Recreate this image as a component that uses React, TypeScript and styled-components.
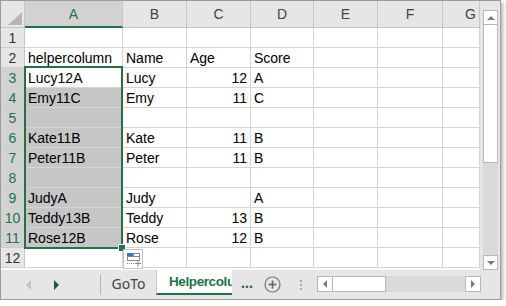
import React from 'react';
import styled, { createGlobalStyle } from 'styled-components';

const GlobalStyle = createGlobalStyle`
	body {
		margin: 0;
		background: #ffffff;
		font-family: 'Liberation Sans', Arial, sans-serif;
	}
`;

const GREEN = '#217346';

const Window = styled.div`
	width: 501px;
	height: 300px;
	box-sizing: border-box;
	border: 1px solid #9c9c9c;
	box-shadow: 2px 2px 4px rgba(0, 0, 0, 0.3);
	background: #ffffff;
	display: flex;
	flex-direction: column;
	overflow: hidden;
`;

const Main = styled.div`
	display: flex;
	height: 269px;
`;

const Sheet = styled.div`
	position: relative;
	width: 479px;
	display: grid;
	grid-template-columns: 24px 98px 64px 64px 63px 64px 65px 37px;
	grid-template-rows: 27px repeat(12, 20px);
	align-content: start;
	font-size: 14px;
`;

const HeaderCell = styled.div<{ $selected?: boolean; $end?: boolean }>`
	box-sizing: border-box;
	display: flex;
	align-items: center;
	justify-content: ${(p) => (p.$end ? 'flex-end' : 'center')};
	padding-right: ${(p) => (p.$end ? '3px' : '0')};
	background: ${(p) => (p.$selected ? '#d2d2d2' : '#e6e6e6')};
	color: ${(p) => (p.$selected ? GREEN : '#444444')};
	border-right: 1px solid #c6c6c6;
	border-bottom: ${(p) => (p.$selected ? `2px solid ${GREEN}` : '1px solid #c6c6c6')};
	overflow: hidden;
`;

const Corner = styled.div`
	box-sizing: border-box;
	display: flex;
	align-items: flex-end;
	justify-content: flex-end;
	padding: 0 2px 2px 0;
	background: #e6e6e6;
	border-right: 1px solid #c6c6c6;
	border-bottom: 1px solid #c6c6c6;
`;

const RowHead = styled.div<{ $selected?: boolean }>`
	box-sizing: border-box;
	display: flex;
	align-items: center;
	justify-content: center;
	background: ${(p) => (p.$selected ? '#d2d2d2' : '#e6e6e6')};
	color: ${(p) => (p.$selected ? GREEN : '#333333')};
	border-right: 1px solid #c6c6c6;
	border-bottom: 1px solid #cfcfcf;
`;

const Cell = styled.div<{ $fill?: boolean; $right?: boolean }>`
	box-sizing: border-box;
	display: flex;
	align-items: center;
	justify-content: ${(p) => (p.$right ? 'flex-end' : 'flex-start')};
	padding: 1px 3px 0 3px;
	background: ${(p) => (p.$fill ? '#c6c6c6' : '#ffffff')};
	color: #000000;
	border-right: 1px solid #d4d4d4;
	border-bottom: 1px solid #d4d4d4;
	white-space: nowrap;
	overflow: hidden;
`;

const Selection = styled.div`
	position: absolute;
	left: 23px;
	top: 65px;
	width: 99px;
	height: 183px;
	box-sizing: border-box;
	border: 2px solid ${GREEN};
	pointer-events: none;
`;

const FillHandle = styled.div`
	position: absolute;
	left: 117px;
	top: 243px;
	width: 6px;
	height: 6px;
	background: ${GREEN};
	border: 1px solid #ffffff;
`;

const QuickAnalysis = styled.div`
	position: absolute;
	left: 122px;
	top: 248px;
	width: 20px;
	height: 20px;
	box-sizing: border-box;
	background: #ffffff;
	border: 1px solid #c3c3c3;
	display: flex;
	align-items: center;
	justify-content: center;
	z-index: 2;
`;

const VScroll = styled.div`
	width: 20px;
	background: #e6e6e6;
	display: flex;
	flex-direction: column;
	padding: 9px 2px 0 3px;
	box-sizing: border-box;
`;

const ScrollButton = styled.div`
	box-sizing: border-box;
	width: 15px;
	height: 15px;
	background: #ffffff;
	border: 1px solid #b9b9b9;
	display: flex;
	align-items: center;
	justify-content: center;
	flex-shrink: 0;
`;

const VThumb = styled.div`
	box-sizing: border-box;
	width: 15px;
	height: 138px;
	background: #ffffff;
	border: 1px solid #b9b9b9;
	border-top: none;
`;

const VTrack = styled.div`
	flex: 1;
	width: 15px;
	background: #dadada;
`;

const TabBar = styled.div`
	height: 29px;
	background: #e6e6e6;
	display: flex;
	align-items: stretch;
	font-family: 'Noto Sans', 'Open Sans', sans-serif;
	font-size: 14px;
`;

const NavArea = styled.div`
	width: 99px;
	display: flex;
	align-items: center;
	padding-left: 25px;
	gap: 23px;
	box-sizing: border-box;
`;

const Divider = styled.div`
	width: 1px;
	align-self: center;
	height: 20px;
	background: #b4b4b4;
`;

const SheetTab = styled.div<{ $active?: boolean; $width: number }>`
	width: ${(p) => p.$width}px;
	box-sizing: border-box;
	display: flex;
	align-items: center;
	justify-content: ${(p) => (p.$active ? 'flex-start' : 'center')};
	padding-left: ${(p) => (p.$active ? '12px' : '0')};
	padding-bottom: ${(p) => (p.$active ? '1px' : '3px')};
	background: ${(p) => (p.$active ? '#ffffff' : 'transparent')};
	color: ${(p) => (p.$active ? GREEN : '#444444')};
	font-family: ${(p) => (p.$active ? "'Liberation Sans', Arial, sans-serif" : 'inherit')};
	font-size: ${(p) => (p.$active ? '13.5px' : '14px')};
	letter-spacing: ${(p) => (p.$active ? '-0.4px' : '0')};
	font-weight: ${(p) => (p.$active ? 700 : 400)};
	border-left: ${(p) => (p.$active ? '1px solid #c6c6c6' : 'none')};
	border-bottom: ${(p) => (p.$active ? `2px solid ${GREEN}` : 'none')};
	margin-bottom: ${(p) => (p.$active ? '4px' : '0')};
	white-space: nowrap;
	overflow: hidden;
`;

const More = styled.div`
	width: 30px;
	display: flex;
	align-items: center;
	justify-content: center;
	padding-bottom: 4px;
	box-sizing: border-box;
	color: #2f5f46;
	font-weight: 700;
`;

const AddButton = styled.div`
	width: 20px;
	display: flex;
	align-items: center;
	justify-content: center;
`;

const DotSep = styled.div`
	width: 2px;
	height: 10px;
	align-self: center;
	margin: 0 15px 0 18px;
	background-image: linear-gradient(#a9a9a9 50%, transparent 50%);
	background-size: 2px 4px;
`;

const HScroll = styled.div`
	width: 164px;
	height: 16px;
	align-self: center;
	display: flex;
	background: #dadada;
	margin-bottom: 1px;
`;

const HThumb = styled.div`
	box-sizing: border-box;
	width: 53px;
	height: 16px;
	background: #ffffff;
	border: 1px solid #b9b9b9;
	border-left: none;
	margin-right: auto;
`;

const HButton = styled(ScrollButton)`
	width: 16px;
	height: 16px;
`;

type Row = { n: number; a: string; b: string; c: string; d: string; cRight?: boolean };

const rows: Row[] = [
	{ n: 1, a: '', b: '', c: '', d: '' },
	{ n: 2, a: 'helpercolumn', b: 'Name', c: 'Age', d: 'Score' },
	{ n: 3, a: 'Lucy12A', b: 'Lucy', c: '12', d: 'A', cRight: true },
	{ n: 4, a: 'Emy11C', b: 'Emy', c: '11', d: 'C', cRight: true },
	{ n: 5, a: '', b: '', c: '', d: '' },
	{ n: 6, a: 'Kate11B', b: 'Kate', c: '11', d: 'B', cRight: true },
	{ n: 7, a: 'Peter11B', b: 'Peter', c: '11', d: 'B', cRight: true },
	{ n: 8, a: '', b: '', c: '', d: '' },
	{ n: 9, a: 'JudyA', b: 'Judy', c: '', d: 'A' },
	{ n: 10, a: 'Teddy13B', b: 'Teddy', c: '13', d: 'B', cRight: true },
	{ n: 11, a: 'Rose12B', b: 'Rose', c: '12', d: 'B', cRight: true },
	{ n: 12, a: '', b: '', c: '', d: '' },
];

const Tri = ({ dir, color = '#7a7a7a', size = 4 }: { dir: 'up' | 'down' | 'left' | 'right'; color?: string; size?: number }) => {
	const s = size * 2;
	const pts = {
		up: `0,${size} ${s},${size} ${size},0`,
		down: `0,0 ${s},0 ${size},${size}`,
		left: `${size},0 ${size},${s} 0,${size}`,
		right: `0,0 0,${s} ${size},${size}`,
	}[dir];
	const vertical = dir === 'up' || dir === 'down';
	return (
		<svg width={vertical ? s : size} height={vertical ? size : s}>
			<polygon points={pts} fill={color} />
		</svg>
	);
};

export default function App() {
	const cols = ['A', 'B', 'C', 'D', 'E', 'F'];
	return (
		<>
			<GlobalStyle />
			<Window>
				<Main>
					<Sheet>
						<Corner>
							<svg width="14" height="13">
								<polygon points="14,0 14,13 0,13" fill="#b5b5b5" />
							</svg>
						</Corner>
						{cols.map((c) => (
							<HeaderCell key={c} $selected={c === 'A'}>
								{c}
							</HeaderCell>
						))}
						<HeaderCell $end>G</HeaderCell>

						{rows.map((r) => {
							const sel = r.n >= 3 && r.n <= 11;
							return (
								<React.Fragment key={r.n}>
									<RowHead $selected={sel}>{r.n}</RowHead>
									<Cell $fill={sel && r.n !== 3}>{r.a}</Cell>
									<Cell>{r.b}</Cell>
									<Cell $right={r.cRight}>{r.c}</Cell>
									<Cell>{r.d}</Cell>
									<Cell />
									<Cell />
									<Cell />
								</React.Fragment>
							);
						})}

						<Selection />
						<FillHandle />
						<QuickAnalysis>
							<svg width="18" height="18" viewBox="0 0 18 18">
								<rect x="3" y="3" width="6" height="3" fill="#2b78d6" />
								<rect x="9.5" y="3.5" width="6" height="3" fill="none" stroke="#8a8a8a" />
								<rect x="3.5" y="6.5" width="12" height="4" fill="none" stroke="#8a8a8a" />
								<line x1="3" y1="13.5" x2="10" y2="13.5" stroke="#8a8a8a" strokeDasharray="1 1" />
								<line x1="11" y1="13.5" x2="17" y2="13.5" stroke="#8a8a8a" />
								<line x1="14" y1="10.5" x2="14" y2="16.5" stroke="#8a8a8a" />
							</svg>
						</QuickAnalysis>
					</Sheet>
					<VScroll>
						<ScrollButton>
							<Tri dir="up" />
						</ScrollButton>
						<VThumb />
						<VTrack />
						<ScrollButton>
							<Tri dir="down" />
						</ScrollButton>
					</VScroll>
				</Main>
				<TabBar>
					<NavArea>
						<Tri dir="left" color="#c4c4c4" size={5} />
						<Tri dir="right" color="#1f5c3f" size={5} />
					</NavArea>
					<Divider />
					<SheetTab $width={55}>GoTo</SheetTab>
					<SheetTab $active $width={76}>
						Helpercolu
					</SheetTab>
					<More>...</More>
					<AddButton>
						<svg width="17" height="17" viewBox="0 0 17 17">
							<circle cx="8.5" cy="8.5" r="7.5" fill="none" stroke="#777777" strokeWidth="1.2" />
							<line x1="8.5" y1="4.5" x2="8.5" y2="12.5" stroke="#666666" strokeWidth="1.6" />
							<line x1="4.5" y1="8.5" x2="12.5" y2="8.5" stroke="#666666" strokeWidth="1.6" />
						</svg>
					</AddButton>
					<DotSep />
					<HScroll>
						<HButton>
							<Tri dir="left" />
						</HButton>
						<HThumb />
						<HButton>
							<Tri dir="right" />
						</HButton>
					</HScroll>
				</TabBar>
			</Window>
		</>
	);
}
